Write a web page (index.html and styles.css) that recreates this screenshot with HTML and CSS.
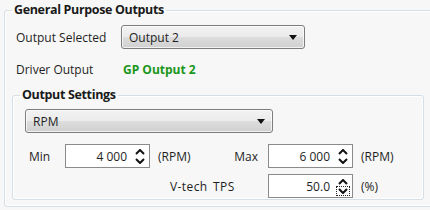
FILE: index.html
```html
<!DOCTYPE html>
<html lang="en">
<head>
    <meta charset="UTF-8">
    <title>General Purpose Outputs</title>
    <link rel="stylesheet" href="styles.css">
</head>
<body>
    <fieldset class="group outer">
        <legend>General Purpose Outputs</legend>

        <div class="row">
            <span class="row-label">Output Selected</span>
            <div class="combo output-combo">
                <span>Output 2</span>
                <span class="combo-arrow"></span>
            </div>
        </div>

        <div class="row">
            <span class="row-label">Driver Output</span>
            <span class="driver-name">GP Output 2</span>
        </div>

        <fieldset class="group inner">
            <legend>Output Settings</legend>

            <div class="combo mode-combo">
                <span>RPM</span>
                <span class="combo-arrow"></span>
            </div>

            <div class="limits">
                <span class="field-label">Min</span>
                <div class="spin-box">
                    <span class="spin-value">4 000</span>
                    <span class="spin-btns">
                        <svg class="chev" width="10" height="6" viewBox="0 0 10 6"><polyline points="1,5 5,1 9,5"/></svg>
                        <svg class="chev" width="10" height="6" viewBox="0 0 10 6"><polyline points="1,1 5,5 9,1"/></svg>
                    </span>
                </div>
                <span class="unit">(RPM)</span>
                <span class="field-label right">Max</span>
                <div class="spin-box">
                    <span class="spin-value">6 000</span>
                    <span class="spin-btns">
                        <svg class="chev" width="10" height="6" viewBox="0 0 10 6"><polyline points="1,5 5,1 9,5"/></svg>
                        <svg class="chev" width="10" height="6" viewBox="0 0 10 6"><polyline points="1,1 5,5 9,1"/></svg>
                    </span>
                </div>
                <span class="unit">(RPM)</span>

                <span class="field-label tps-label">V-tech TPS</span>
                <div class="spin-box">
                    <span class="spin-value">50.0</span>
                    <span class="spin-btns">
                        <svg class="chev" width="10" height="6" viewBox="0 0 10 6"><polyline points="1,5 5,1 9,5"/></svg>
                        <svg class="chev focused" width="10" height="6" viewBox="0 0 10 6"><polyline points="1,1 5,5 9,1"/></svg>
                    </span>
                </div>
                <span class="unit">(%)</span>
            </div>
        </fieldset>
    </fieldset>
</body>
</html>
```

FILE: styles.css
```css
* {
    box-sizing: border-box;
}

body {
    margin: 0;
    width: 430px;
    height: 210px;
    overflow: hidden;
    background: #f7f7f7;
    font-family: 'Open Sans', 'Noto Sans', sans-serif;
    font-size: 12px;
    color: #1e1e1e;
}

.group {
    border: 1px solid #d5dfe5;
    border-radius: 3px;
    box-shadow: inset 0 0 0 1px #ffffff;
    margin: 0;
    min-width: 0;
}

.group legend {
    font-size: 12.5px;
    font-weight: bold;
    letter-spacing: -0.35px;
    line-height: 16px;
    padding: 0 2px;
    color: #1a1a1a;
}

.outer {
    margin: 2px 0 0 4px;
    width: 440px;
    padding: 7px 11px 6px 11px;
}

.outer > legend {
    margin-left: -4px;
}

.row {
    display: flex;
    align-items: center;
    height: 24px;
    margin-bottom: 8px;
}

.row + .row {
    margin-bottom: 6px;
}

.row-label {
    width: 105px;
}

.driver-name {
    margin-left: 2px;
    font-weight: bold;
    color: #1a961a;
}

.combo {
    display: flex;
    align-items: center;
    justify-content: space-between;
    height: 24px;
    padding: 0 7px;
    border: 1px solid #7d7d7d;
    border-radius: 3px;
    background: linear-gradient(#f2f2f2 0%, #ebebeb 50%, #dddddd 50%, #d0d0d0 100%);
    box-shadow: inset 0 0 0 1px rgba(255, 255, 255, 0.7);
}

.output-combo {
    width: 184px;
}

.combo-arrow {
    width: 0;
    height: 0;
    border-left: 4px solid transparent;
    border-right: 4px solid transparent;
    border-top: 5px solid #111;
}

.inner {
    margin-left: -4px;
    width: 412px;
    padding: 6px 12px 1px 12px;
}

.inner > legend {
    margin-left: -5px;
}

.mode-combo {
    width: 248px;
}

.limits {
    display: grid;
    grid-template-columns: 40px 85px 50px 68px 85px auto;
    grid-auto-rows: 24px;
    row-gap: 6px;
    align-items: center;
    margin-top: 11px;
}

.field-label {
    padding-left: 4px;
}

.field-label.right {
    text-align: right;
    padding-left: 0;
    padding-right: 10px;
}

.tps-label {
    grid-column: 3 / 5;
    padding-left: 20px;
    letter-spacing: 0.4px;
    word-spacing: 2px;
}

.spin-box {
    display: flex;
    align-items: center;
    justify-content: flex-end;
    height: 24px;
    background: #ffffff;
    border: 1px solid #8a8a8a;
}

.spin-value {
    padding-right: 5px;
}

.spin-btns {
    display: flex;
    flex-direction: column;
    align-items: center;
    gap: 3px;
    width: 17px;
    padding-right: 2px;
}

.chev {
    display: block;
}

.chev polyline {
    fill: none;
    stroke: #111;
    stroke-width: 2;
}

.chev.focused {
    outline: 1px dotted #222;
    outline-offset: 1px;
}

.unit {
    padding-left: 8px;
}
```
